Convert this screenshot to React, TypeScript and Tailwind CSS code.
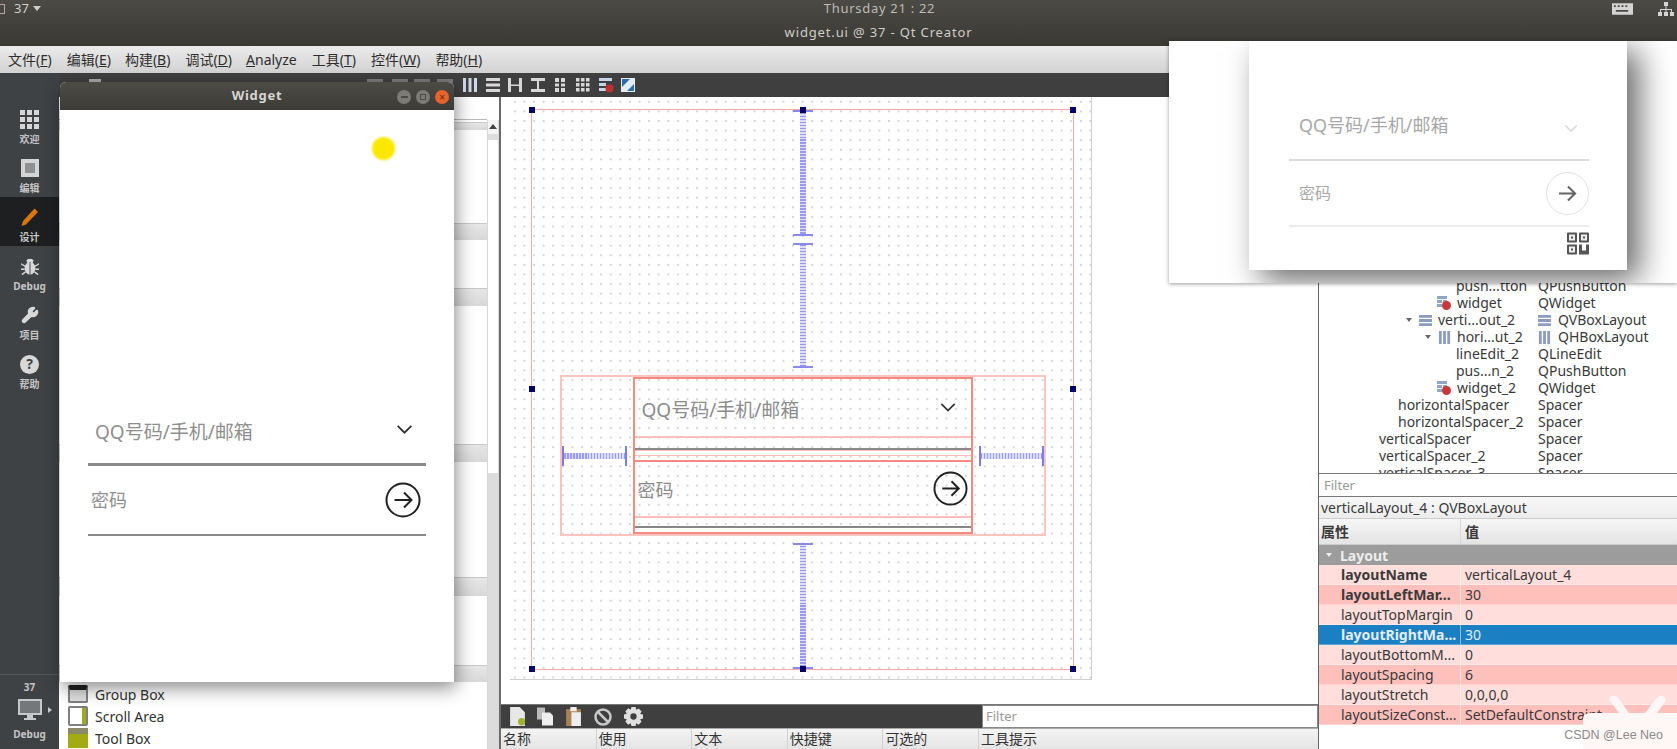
import { Fragment, type ReactNode } from "react"
import { Wrench } from "lucide-react"

const SANS = "[font-family:'Noto_Sans','Noto_Sans_CJK_SC',sans-serif]"

const menus = [
  { label: "文件(", key: "F", end: ")", cls: "ml-[8px]" },
  { label: "编辑(", key: "E", end: ")", cls: "ml-[15px]" },
  { label: "构建(", key: "B", end: ")", cls: "ml-[14px]" },
  { label: "调试(", key: "D", end: ")", cls: "ml-[15px]" },
  { label: "", key: "A", end: "nalyze", cls: "ml-[14px]" },
  { label: "工具(", key: "T", end: ")", cls: "ml-[15px]" },
  { label: "控件(", key: "W", end: ")", cls: "ml-[15px]" },
  { label: "帮助(", key: "H", end: ")", cls: "ml-[15px]" },
]

const treeRows = [
  { name: "push...tton", type: "QPushButton", pad: "pl-[137px]" },
  { name: "widget", type: "QWidget", pad: "pl-[118px]", icon: "widget" },
  { name: "verti...out_2", type: "QVBoxLayout", pad: "pl-[100px]", icon: "v", arrow: true },
  { name: "hori...ut_2", type: "QHBoxLayout", pad: "pl-[119px]", icon: "h", arrow: true },
  { name: "lineEdit_2", type: "QLineEdit", pad: "pl-[137px]" },
  { name: "pus...n_2", type: "QPushButton", pad: "pl-[137px]" },
  { name: "widget_2", type: "QWidget", pad: "pl-[118px]", icon: "widget" },
  { name: "horizontalSpacer", type: "Spacer", pad: "pl-[79px]" },
  { name: "horizontalSpacer_2", type: "Spacer", pad: "pl-[79px]" },
  { name: "verticalSpacer", type: "Spacer", pad: "pl-[60px]" },
  { name: "verticalSpacer_2", type: "Spacer", pad: "pl-[60px]" },
  { name: "verticalSpacer_3", type: "Spacer", pad: "pl-[60px]" },
]

const props = [
  { name: "layoutName", value: "verticalLayout_4", cls: "bg-[#ffdedb] font-bold" },
  { name: "layoutLeftMar...", value: "30", cls: "bg-[#ffbfba] font-bold" },
  { name: "layoutTopMargin", value: "0", cls: "bg-[#ffdedb]" },
  { name: "layoutRightMa...", value: "30", cls: "bg-[#1b7fc4] text-[#e4eef6] font-bold" },
  { name: "layoutBottomM...", value: "0", cls: "bg-[#ffdedb]" },
  { name: "layoutSpacing", value: "6", cls: "bg-[#ffbfba]" },
  { name: "layoutStretch", value: "0,0,0,0", cls: "bg-[#ffdedb]" },
  { name: "layoutSizeConst...", value: "SetDefaultConstraint", cls: "bg-[#ffbfba]" },
]

const boxGaps = [
  { white: "", gray: "h-[8px] mt-[2px]" },
  { white: "h-[93px]", gray: "h-[17px]" },
  { white: "h-[48px]", gray: "h-[18px]" },
  { white: "h-[138px]", gray: "h-[18px]" },
  { white: "h-[115px]", gray: "h-[19px]" },
  { white: "h-[69px]", gray: "h-[17px]" },
]

function Chevron({ className }: { className: string }) {
  return (
    <svg viewBox="0 0 18 12" fill="none" stroke="currentColor" strokeWidth="2" className={className}>
      <path d="M1.5 2 L9 9.5 L16.5 2" />
    </svg>
  )
}

function ArrowCircle({ className }: { className: string }) {
  return (
    <svg viewBox="0 0 36 36" fill="none" stroke="#222" strokeWidth="2" className={className}>
      <circle cx="18" cy="18" r="16.5" />
      <path d="M9.5 18 H26 M19 10.5 L26.5 18 L19 25.5" />
    </svg>
  )
}

function VSpring({ h }: { h: string }) {
  return (
    <div className={"flex flex-col items-center shrink-0 " + h}>
      <div className="h-[2px] w-[20px] bg-[#8a8aee]" />
      <div className="flex-1 w-[6px] bg-[repeating-linear-gradient(0deg,#9a9af6_0_1.5px,#dedeff_1.5px_3px)]" />
      <div className="h-[2px] w-[20px] bg-[#8a8aee]" />
    </div>
  )
}

function HSpring() {
  return (
    <div className="flex items-center w-[65px] shrink-0">
      <div className="w-[2px] h-[20px] bg-[#7c7cea]" />
      <div className="flex-1 h-[6px] bg-[repeating-linear-gradient(90deg,#9a9af6_0_1.5px,#dedeff_1.5px_3px)]" />
      <div className="w-[2px] h-[20px] bg-[#7c7cea]" />
    </div>
  )
}

function Handle({ className }: { className: string }) {
  return <div className={"absolute w-[6px] h-[6px] bg-[#00006a] " + className} />
}

function ToolIcon({ kind }: { kind: string }) {
  const c = "#d8d8d8"
  return (
    <svg viewBox="0 0 16 16" className="w-[16px] h-[16px]" fill={c}>
      {kind === "cols" && <path fill="#cfd8ea" d="M1 1h3v14H1zM6.500 1h3v14h-3zM12 1h3v14h-3z" />}
      {kind === "rows" && <path d="M1 1h14v3H1zM1 6.500h14v3H1zM1 12h14v3H1z" />}
      {kind === "hsplit" && <path d="M1 1h3v14H1zM12 1h3v14h-3zM4 7.500h8v1.500H4z" />}
      {kind === "vsplit" && <path d="M1 1h14v3H1zM1 12h14v3H1zM7 4h2v8H7z" />}
      {kind === "form" && <path d="M3 1h4v4H3zM9 1h4v4H9zM3 6.500h4v3H3zM9 6.500h4v3H9zM3 11h4v4H3zM9 11h4v4H9z" />}
      {kind === "grid" && <path d="M1 1h3.500v3.500H1zM6 1h3.500v3.500H6zM11 1h3.500v3.500H11zM1 6h3.500v3.500H1zM6 6h3.500v3.500H6zM11 6h3.500v3.500H11zM1 11h3.500v3.500H1zM6 11h3.500v3.500H6zM11 11h3.500v3.500H11z" />}
      {kind === "break" && (
        <>
          <path fill="#c6d4ea" d="M1 1h13v3H1zM1 6h7v3H1zM1 11h7v3H1z" />
          <circle cx="11.500" cy="11.500" r="4" fill="#c03030" />
        </>
      )}
      {kind === "adjust" && (
        <>
          <path fill="#e4ecf6" d="M1 1h14v14H1z" />
          <path fill="#2a6db0" d="M2 2h8l-8 8zM14 14H7l7-7z" />
        </>
      )}
    </svg>
  )
}

function SmallLayout({ kind }: { kind: string }) {
  if (kind === "widget") {
    return (
      <svg viewBox="0 0 14 14" className="w-[14px] h-[14px] shrink-0">
        <path fill="#8fa6c8" d="M0 0h10v3H0zM0 4h5v3H0zM6 4h4v3H6zM0 8h5v3H0z" />
        <circle cx="9.500" cy="9.500" r="4.500" fill="#c8383a" />
      </svg>
    )
  }
  return (
    <svg viewBox="0 0 14 14" className="w-[13px] h-[13px] shrink-0">
      {kind === "v" && <path fill="#8a9cc0" d="M0 1h14v3H0zM0 5.500h14v3H0zM0 10h14v3H0z" />}
      {kind === "h" && <path fill="#8a9cc0" d="M1 0h3v14H1zM5.500 0h3v14h-3zM10 0h3v14h-3z" />}
    </svg>
  )
}

function RailItem({ label, children, active }: { label: string; children: ReactNode; active?: boolean }) {
  return (
    <div className={"flex flex-col items-center h-[49px] pt-[6px] " + (active ? "bg-[#1e1f20]" : "")}>
      <div className="h-[28px] flex items-center justify-center">{children}</div>
      <div className="text-[10px] leading-[12px] font-bold text-[#c4c4c4]">{label}</div>
    </div>
  )
}

function TopBar() {
  return (
    <div className="flex flex-col h-[46px] shrink-0 bg-gradient-to-b from-[#4c4a45] to-[#3b3934] text-[#cfcdc8]">
      <div className="flex items-center justify-between h-[16px] pr-[3px] pt-[1px]">
        <div className="flex items-center gap-[4px] w-[285px] text-[13px] leading-none">
          <div className="w-[5px] h-[10px] border border-l-0 border-[#b9a39a] mr-[5px]" />
          37
          <div className="w-0 h-0 border-x-[4px] border-x-transparent border-t-[5px] border-t-[#cfcdc8]" />
        </div>
        <div className="text-[13px] tracking-[0.7px] leading-none text-[#bdbbb6]">Thursday 21 : 22</div>
        <div className="flex items-center justify-end gap-[25px] w-[200px]">
          <svg viewBox="0 0 22 12" className="w-[21px] h-[12px]" fill="#d4d4d4">
            <path d="M0 0h22v12H0z" />
            <path fill="#4a4843" d="M2 2h2v2H2zM6 2h2v2H6zM10 2h2v2h-2zM14 2h2v2h-2zM4 7h13v2H4z" />
          </svg>
          <svg viewBox="0 0 16 14" className="w-[16px] h-[14px]" fill="#d4d4d4">
            <path d="M6 0h4v4H6zM0 10h4v4H0zM6 10h4v4H6zM12 10h4v4h-4zM7.500 4h1v3h5.500v3h-1V8H8.500v2h-1V8H3v2H2V7h5.500z" />
          </svg>
        </div>
      </div>
      <div className="mt-[7px] pl-[80px] text-center text-[13px] leading-[18px] tracking-[0.85px]">widget.ui @ 37 - Qt Creator</div>
    </div>
  )
}

function MenuBar() {
  return (
    <div className="flex items-center h-[27px] shrink-0 bg-gradient-to-b from-[#ebebeb] to-[#d2d2d2] text-[14px] text-[#2e2e2e]">
      {menus.map((m) => (
        <span key={m.key} className={m.cls + " whitespace-nowrap"}>
          {m.label}
          <span className="underline">{m.key}</span>
          {m.end}
        </span>
      ))}
    </div>
  )
}

function Rail() {
  return (
    <div className="flex flex-col w-[59px] shrink-0 bg-[#3f4245]">
      <div className="h-[26px]" />
      <RailItem label="欢迎">
        <div className="grid grid-cols-3 gap-[2px]">
          {Array.from({ length: 9 }).map((_, i) => (
            <div key={i} className="w-[5px] h-[5px] bg-[#d6d6d6]" />
          ))}
        </div>
      </RailItem>
      <RailItem label="编辑">
        <div className="w-[18px] h-[18px] bg-[#d4d4d4] flex items-center justify-center">
          <div className="w-[10px] h-[10px] bg-[#8e9092]" />
        </div>
      </RailItem>
      <RailItem label="设计" active>
        <svg viewBox="0 0 20 20" className="w-[20px] h-[20px]" fill="#d9760c">
          <path d="M14.500 1.500 L18 5 L6 17.500 L1.500 19 L3 14 Z" />
        </svg>
      </RailItem>
      <RailItem label="Debug">
        <svg viewBox="0 0 20 20" className="w-[18px] h-[19px]" fill="#d8d8d8">
          <ellipse cx="10" cy="12" rx="6" ry="7" />
          <path d="M6 3 Q10 0 14 3 L13 6 H7z" />
          <path stroke="#d8d8d8" strokeWidth="1.500" d="M0 7l5 3M20 7l-5 3M0 13h4M20 13h-4M1 19l4-3M19 19l-4-3" />
          <path stroke="#3f4245" strokeWidth="1" d="M10 5v14" />
        </svg>
      </RailItem>
      <RailItem label="项目">
        <Wrench size={18} fill="#d8d8d8" stroke="#d8d8d8" />
      </RailItem>
      <RailItem label="帮助">
        <div className="w-[19px] h-[19px] rounded-full bg-[#d8d8d8] flex items-center justify-center text-[14px] font-bold leading-none text-[#3f4245]">?</div>
      </RailItem>
      <div className="flex-1" />
      <div className="border-t border-[#55585a] h-[75px] flex flex-col items-center pt-[6px]">
        <div className="text-[10px] leading-[12px] font-bold text-[#c4c4c4]">37</div>
        <div className="flex items-center gap-[6px] h-[34px] pl-[10px]">
          <svg viewBox="0 0 24 24" className="w-[24px] h-[24px]" fill="#c8c8c8">
            <path d="M0 1h24v16H0zM9 17h6v3h3v2H6v-2h3z" />
            <path fill="#75787a" d="M2 3h20v12H2z" />
          </svg>
          <div className="w-0 h-0 border-y-[3px] border-y-transparent border-l-[4px] border-l-[#c8c8c8]" />
        </div>
        <div className="text-[10px] leading-[14px] font-bold text-[#c4c4c4]">Debug</div>
      </div>
    </div>
  )
}

function Toolbar() {
  return (
    <div className="flex items-center h-[24px] shrink-0 bg-[#3f3f3f] pl-[30px]">
      <div className="w-[12px] h-[12px] bg-[#a8a8a8]" />
      <div className="ml-[266px] w-[16px] h-[12px] bg-[#7a7a7a]" />
      <div className="ml-[9px] w-[16px] h-[12px] bg-[#7a7a7a]" />
      <div className="ml-[6px] w-[16px] h-[12px] bg-[#7a7a7a]" />
      <div className="ml-[7px] w-[16px] h-[12px] bg-[#7a7a7a]" />
      <div className="flex items-center ml-[9px] gap-[6.600px]">
        {["cols", "rows", "hsplit", "vsplit", "form", "grid", "break", "adjust"].map((k) => (
          <ToolIcon key={k} kind={k} />
        ))}
      </div>
    </div>
  )
}

function WidgetBox() {
  return (
    <div className="flex w-[440px] shrink-0 bg-white">
      <div className="flex flex-col w-[428px]">
        <div className="h-[23px] shrink-0 border-b border-[#bbb]" />
        {boxGaps.map((g, i) => (
          <Fragment key={i}>
            {g.white && <div className={"shrink-0 " + g.white} />}
            <div className={"shrink-0 border-t border-[#c8c8c8] bg-gradient-to-b from-[#e6e6e6] to-[#d8d8d8] " + g.gray} />
          </Fragment>
        ))}
        <div className="flex flex-col mt-[1px] pl-[9px] text-[14px] text-[#333]">
          <div className="flex items-center gap-[7px] h-[22px]">
            <div className="w-[20px] h-[18px] rounded-[2px] border-2 border-[#808080] bg-[#ddd] border-t-[5px] border-t-[#222]" />
            Group Box
          </div>
          <div className="flex items-center gap-[7px] h-[22px]">
            <div className="flex w-[20px] h-[20px] rounded-[2px] border-2 border-[#808080] bg-white justify-end">
              <div className="w-[4px] bg-[#a0a820]" />
            </div>
            Scroll Area
          </div>
          <div className="flex items-center gap-[7px] h-[22px]">
            <div className="w-[20px] h-[20px] bg-[#a2ab10] border-t-[6px] border-t-[#8a8a6a]" />
            Tool Box
          </div>
        </div>
      </div>
      <div className="flex flex-col w-[12px] mt-[23px] bg-[#f4f4f4] border-x border-[#d8d8d8]">
        <div className="flex justify-center pt-[4px] h-[14px]">
          <div className="w-0 h-0 border-x-[4px] border-x-transparent border-b-[5px] border-b-[#444]" />
        </div>
        <div className="h-[6px] bg-[#ddd]" />
        <div className="h-[333px] bg-white" />
        <div className="flex-1 bg-[#dcdcdc]" />
      </div>
    </div>
  )
}

function LoginPreview() {
  return (
    <div className="flex flex-col w-[342px] h-full border-[2.500px] border-[#f58b80] text-[#8c8c8c]">
      <div className="flex items-center justify-between h-[58.500px] shrink-0 border-b-2 border-[#fbc0bb] pl-[7px] pr-[15px] text-[19px]">
        <span className="pt-[6px]">QQ号码/手机/邮箱</span>
        <Chevron className="w-[16px] h-[11px] text-[#333]" />
      </div>
      <div className="flex flex-col shrink-0">
        <div className="h-[10px]" />
        <div className="h-[2px] bg-[#888]" />
        <div className="h-[6px] border-y border-[#fbc0bb]" />
        <div className="h-[4px]" />
      </div>
      <div className="flex items-center justify-between h-[58px] shrink-0 border-t-[2.500px] border-b-2 border-t-[#f58b80] border-b-[#fbc0bb] pl-[3px] pr-[3px] text-[18px]">
        <span className="pt-[3px]">密码</span>
        <ArrowCircle className="w-[35px] h-[35px]" />
      </div>
      <div className="flex flex-col flex-1">
        <div className="flex-1" />
        <div className="h-[2px] bg-[#888]" />
        <div className="h-[4px]" />
      </div>
    </div>
  )
}

function DesignArea() {
  return (
    <div className="flex flex-col w-[819px] shrink-0 border-l-2 border-[#6b6b6b] bg-white">
      <div className="flex-1 min-h-0 pl-[9px]">
        <div className="w-[582px] h-[583px] border-r border-b border-[#cfcfcf] pl-[21px] pt-[12px] bg-[radial-gradient(#c6c6c6_0.6px,transparent_0.9px)] bg-[length:9.600px_9.600px]">
          <div className="relative flex flex-col items-center gap-[7px] w-[543px] h-[561px] border border-[#f6a9a5]">
            <Handle className="-left-[3px] -top-[3px]" />
            <Handle className="left-[268px] -top-[3px]" />
            <Handle className="-right-[3px] -top-[3px]" />
            <Handle className="-left-[3px] top-[276px]" />
            <Handle className="-right-[3px] top-[276px]" />
            <Handle className="-left-[3px] -bottom-[3px]" />
            <Handle className="left-[268px] -bottom-[3px]" />
            <Handle className="-right-[3px] -bottom-[3px]" />
            <VSpring h="h-[126px]" />
            <VSpring h="h-[125px]" />
            <div className="flex items-center gap-[6px] w-[486px] h-[161px] shrink-0 border-2 border-[#fbc4bf]">
              <HSpring />
              <LoginPreview />
              <HSpring />
            </div>
            <VSpring h="h-[126px]" />
          </div>
        </div>
      </div>
      <div className="flex h-[24px] shrink-0 border-t border-[#777]">
        <div className="flex items-center gap-[12px] w-[481px] bg-[#3f3f3f] pl-[9px]">
          <svg viewBox="0 0 14 18" className="w-[15px] h-[19px]">
            <path fill="#e8e8e8" d="M0 0h9l5 5v13H0z" />
            <circle cx="11" cy="14" r="3.500" fill="#a2b030" />
          </svg>
          <svg viewBox="0 0 16 18" className="w-[16px] h-[19px]">
            <path fill="#bbb" d="M0 0h8v12H0z" />
            <path fill="#eee" d="M5 5h8l3 3v10H5z" />
          </svg>
          <svg viewBox="0 0 14 18" className="w-[17px] h-[19px]">
            <path fill="#a88252" d="M0 2h14v16H0z" />
            <path fill="#eee" d="M4 0h6v4H4zM5 5h9v13H5z" />
          </svg>
          <svg viewBox="0 0 18 18" className="w-[18px] h-[18px]" fill="none" stroke="#c8c8c8" strokeWidth="2.500">
            <circle cx="9" cy="9" r="7.500" />
            <path d="M4 4l10 10" />
          </svg>
          <svg viewBox="0 0 18 18" className="w-[19px] h-[19px]" fill="#e0e0e0">
            <path fillRule="evenodd" d="M7 0h4l.6 2.700 2.300-1.200 2.800 2.800-1.400 2.300L18 7v4l-2.700.6 1.300 2.300-2.800 2.800-2.300-1.300L11 18H7l-.6-2.600-2.300 1.300-2.800-2.800 1.300-2.300L0 11V7l2.600-.6L1.300 4.100l2.800-2.800 2.300 1.300zM9 6a3 3 0 100 6 3 3 0 000-6z" />
          </svg>
        </div>
        <div className="flex-1 bg-white border border-[#888] px-[3px] text-[13px] leading-[21px] text-[#999]">Filter</div>
      </div>
      <div className="flex h-[21px] shrink-0 bg-gradient-to-b from-[#f4f4f4] to-[#e4e4e4] border-t border-[#aaa] text-[14px] leading-[20px] text-[#333]">
        {["名称", "使用", "文本", "快捷键", "可选的"].map((h) => (
          <div key={h} className="w-[95.600px] pl-[2px] border-r border-[#d0d0d0] whitespace-nowrap">{h}</div>
        ))}
        <div className="pl-[2px]">工具提示</div>
      </div>
    </div>
  )
}

function RightPanel() {
  return (
    <div className="flex flex-col flex-1 min-w-0 bg-white border-l border-[#666] text-[14px] text-[#3a3a3a]">
      <div className="h-[376px] shrink-0 overflow-hidden pt-[180.500px]">
        {treeRows.map((r) => (
          <div key={r.name} className="flex items-center h-[17px] leading-none whitespace-nowrap">
            <div className={"flex items-center gap-[6px] w-[219px] shrink-0 " + r.pad}>
              {r.arrow && <div className="-ml-[13px] mr-[1px] w-0 h-0 border-x-[3.500px] border-x-transparent border-t-[4px] border-t-[#666]" />}
              {r.icon && <SmallLayout kind={r.icon} />}
              <span>{r.name}</span>
            </div>
            <div className="flex items-center gap-[7px]">
              {r.arrow && <SmallLayout kind={r.icon as string} />}
              <span>{r.type}</span>
            </div>
          </div>
        ))}
      </div>
      <div className="h-[24px] shrink-0 border-y border-[#777] px-[5px] text-[13px] leading-[22px] text-[#999]">Filter</div>
      <div className="h-[22px] shrink-0 border-b border-[#ccc] bg-gradient-to-b from-[#f8f8f8] to-[#ececec] pl-[2px] leading-[22px]">verticalLayout_4 : QVBoxLayout</div>
      <div className="flex h-[26px] shrink-0 border-b border-[#ccc] bg-gradient-to-b from-[#f6f6f6] to-[#e4e4e4] font-bold leading-[26px]">
        <div className="w-[142px] pl-[2px] border-r border-[#d8d8d8]">属性</div>
        <div className="pl-[4px]">值</div>
      </div>
      <div className="flex items-center gap-[8px] h-[20px] shrink-0 bg-[#9c9c9c] pl-[7px] font-bold text-[#eee]">
        <div className="w-0 h-0 border-x-[3.500px] border-x-transparent border-t-[4px] border-t-[#eee]" />
        Layout
      </div>
      {props.map((p) => (
        <div key={p.name} className={"flex h-[20px] shrink-0 leading-[20px] border-b border-white/30 " + p.cls}>
          <div className="w-[142px] shrink-0 pl-[22px] border-r border-white/50 whitespace-nowrap overflow-hidden">{p.name}</div>
          <div className="pl-[4px] font-normal whitespace-nowrap">{p.value}</div>
        </div>
      ))}
    </div>
  )
}

function WidgetWindow() {
  return (
    <div className="absolute left-[60px] top-[82px] flex flex-col w-[394px] h-[600px] rounded-t-[6px] bg-white shadow-[2px_6px_18px_rgba(0,0,0,0.45)]">
      <div className="relative flex items-center justify-center h-[28px] shrink-0 rounded-t-[6px] bg-gradient-to-b from-[#4d4b46] to-[#3c3b37]">
        <span className="text-[13px] font-bold tracking-[0.7px] text-[#d8d6d2]">Widget</span>
        <div className="absolute right-[5px] top-[8px] flex gap-[5px]">
          <div className="flex items-center justify-center w-[14px] h-[14px] rounded-full bg-[#7d7b75]">
            <div className="w-[7px] h-[1.500px] bg-[#4d4b46]" />
          </div>
          <div className="flex items-center justify-center w-[14px] h-[14px] rounded-full bg-[#7d7b75]">
            <div className="w-[6px] h-[6px] border border-[#4d4b46]" />
          </div>
          <div className="flex items-center justify-center w-[14px] h-[14px] rounded-full bg-[#e8622c] text-[10px] leading-none text-[#5a2a14]">×</div>
        </div>
      </div>
      <div className="flex flex-col pt-[285px] px-[28px] text-[#8f8f8f]">
        <div className="flex items-center justify-between h-[68px] pt-[7px] pl-[7px] pr-[13px] text-[19px]">
          <span>QQ号码/手机/邮箱</span>
          <Chevron className="w-[17px] h-[11px] -mt-[6px] text-[#333]" />
        </div>
        <div className="h-[2.500px] bg-[#8a8a8a]" />
        <div className="flex items-center justify-between h-[68px] pl-[3px] pr-[5px] text-[18px]">
          <span className="pt-[2px]">密码</span>
          <ArrowCircle className="w-[36px] h-[36px]" />
        </div>
        <div className="h-[2.500px] bg-[#8a8a8a]" />
      </div>
      <div className="absolute left-[312px] top-[55px] w-[23px] h-[23px] rounded-full bg-[#fbe800] blur-[1px]" />
    </div>
  )
}

function ShotOverlay() {
  return (
    <div className="absolute left-[1169px] top-[41px] w-[508px] h-[242px] pl-[80px] bg-white overflow-hidden shadow-[0_1px_4px_rgba(0,0,0,0.4)]">
      <div className="flex flex-col w-[378px] h-[229px] pt-[68px] pl-[40px] pr-[38px] bg-white text-[#a8a8a8] shadow-[12px_10px_30px_rgba(0,0,0,0.6)]">
        <div className="flex items-center justify-between h-[50px] pl-[10px] pr-[10px] pb-[18px] text-[18px]">
          <span>QQ号码/手机/邮箱</span>
          <Chevron className="w-[16px] h-[9px] mt-[6px] text-[#d8d8d8]" />
        </div>
        <div className="h-[2px] bg-[#dcdcdc]" />
        <div className="flex items-center justify-between h-[64px] pl-[10px] text-[16px]">
          <span>密码</span>
          <div className="flex items-center justify-center w-[43px] h-[43px] rounded-full border border-[#e2e2e2]">
            <svg viewBox="0 0 20 18" fill="none" stroke="#666" strokeWidth="2.200" className="w-[19px] h-[17px]">
              <path d="M1 9 H18 M10.500 1.500 L18 9 L10.500 16.500" />
            </svg>
          </div>
        </div>
        <div className="h-[1.500px] bg-[#ececec]" />
        <div className="flex justify-end pt-[5px]">
          <svg viewBox="0 0 22 22" className="w-[22px] h-[23px]">
            <path fill="#555" d="M0 1a1 1 0 011-1h8a1 1 0 011 1v8a1 1 0 01-1 1H1a1 1 0 01-1-1zM12 1a1 1 0 011-1h8a1 1 0 011 1v8a1 1 0 01-1 1h-8a1 1 0 01-1-1zM0 13a1 1 0 011-1h8a1 1 0 011 1v8a1 1 0 01-1 1H1a1 1 0 01-1-1zM12 12h3v6h4v-6h3v10h-10z" />
            <path fill="#eee" d="M2 2h6v6H2zM14 2h6v6h-6zM2 14h6v6H2z" />
            <path fill="#555" d="M4 4h2v2H4zM16 4h2v2h-2zM4 16h2v2H4z" />
          </svg>
        </div>
      </div>
    </div>
  )
}

function Watermark() {
  return (
    <div className="absolute right-0 bottom-0 w-[112px] h-[54px]">
      <svg viewBox="0 0 94 54" className="absolute right-0 bottom-0 w-[94px] h-[54px]">
        <path fill="#fff6f6" d="M0 54 V24 Q0 18 8 18 H36 L27 6 Q25 1 30 1 Q33 0 36 4 L46 18 H62 L73 4 Q76 0 80 1 Q84 3 82 7 L74 18 H94 V54 Z" />
      </svg>
      <div className="absolute right-[14px] bottom-[8px] whitespace-nowrap [font-family:'Liberation_Sans',sans-serif] text-[12.500px] leading-none text-[#8b8b8b]">CSDN @Lee Neo</div>
    </div>
  )
}

export default function App() {
  return (
    <div className={"relative flex flex-col w-[1677px] h-[749px] overflow-hidden bg-[#3f4245] " + SANS}>
      <TopBar />
      <MenuBar />
      <div className="flex flex-1 min-h-0">
        <Rail />
        <div className="flex flex-col flex-1 min-w-0">
          <Toolbar />
          <div className="flex flex-1 min-h-0">
            <WidgetBox />
            <DesignArea />
            <RightPanel />
          </div>
        </div>
      </div>
      <WidgetWindow />
      <ShotOverlay />
      <Watermark />
    </div>
  )
}
